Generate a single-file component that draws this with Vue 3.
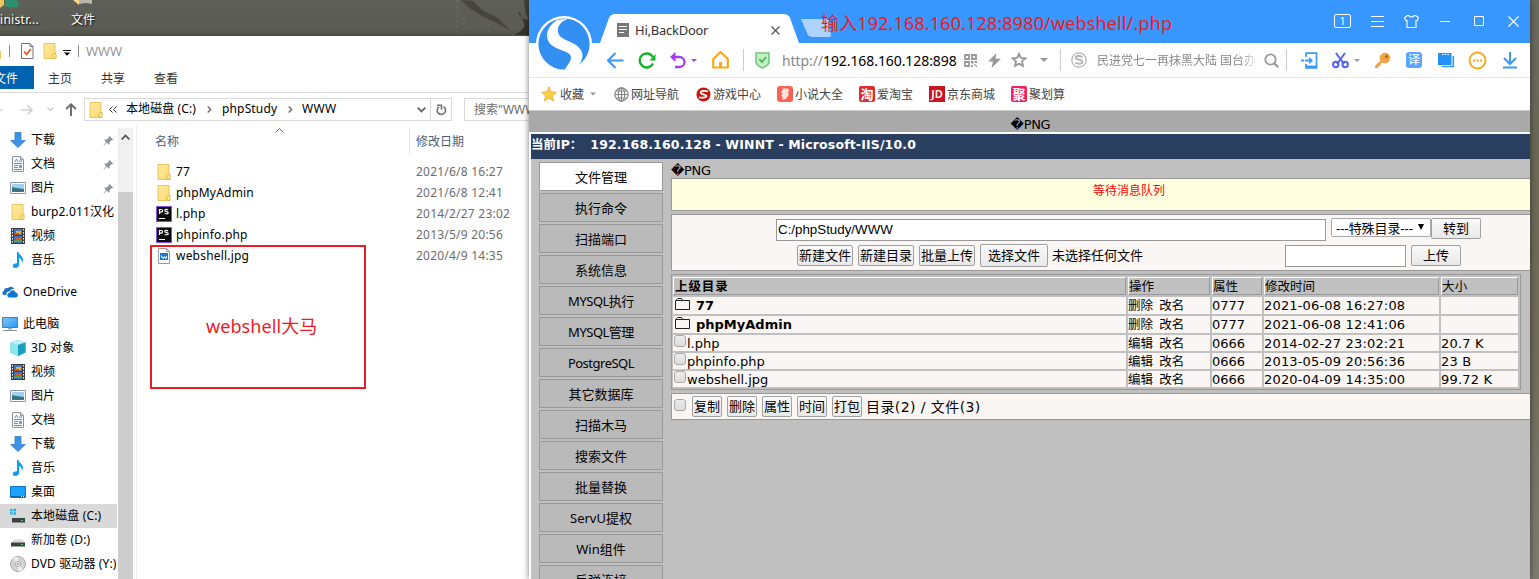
<script setup>
const places = [
  { icon: 'down', label: '下载', pin: true },
  { icon: 'doc', label: '文档', pin: true },
  { icon: 'pic', label: '图片', pin: true },
  { icon: 'folder', label: 'burp2.011汉化' },
  { icon: 'video', label: '视频' },
  { icon: 'music', label: '音乐' },
  { icon: 'cloud', label: 'OneDrive', root: true },
  { icon: 'pc', label: '此电脑', root: true },
  { icon: 'cube', label: '3D 对象' },
  { icon: 'video', label: '视频' },
  { icon: 'pic', label: '图片' },
  { icon: 'doc', label: '文档' },
  { icon: 'down', label: '下载' },
  { icon: 'music', label: '音乐' },
  { icon: 'desk', label: '桌面' },
  { icon: 'diskc', label: '本地磁盘 (C:)', active: true },
  { icon: 'disk', label: '新加卷 (D:)' },
  { icon: 'dvd', label: 'DVD 驱动器 (Y:)' },
]
const files = [
  { icon: 'folder', name: '77', date: '2021/6/8 16:27' },
  { icon: 'folder', name: 'phpMyAdmin', date: '2021/6/8 12:41' },
  { icon: 'ps', name: 'l.php', date: '2014/2/27 23:02' },
  { icon: 'ps', name: 'phpinfo.php', date: '2013/5/9 20:56' },
  { icon: 'jpg', name: 'webshell.jpg', date: '2020/4/9 14:35' },
]
const menu = ['文件管理', '执行命令', '扫描端口', '系统信息', 'MYSQL执行', 'MYSQL管理', 'PostgreSQL', '其它数据库', '扫描木马', '搜索文件', '批量替换', 'ServU提权', 'Win组件', '反弹连接']
const rows = [
  { dir: true, name: '77', ops: '删除 改名', attr: '0777', time: '2021-06-08 16:27:08', size: '' },
  { dir: true, name: 'phpMyAdmin', ops: '删除 改名', attr: '0777', time: '2021-06-08 12:41:06', size: '' },
  { name: 'l.php', ops: '编辑 改名', attr: '0666', time: '2014-02-27 23:02:21', size: '20.7 K' },
  { name: 'phpinfo.php', ops: '编辑 改名', attr: '0666', time: '2013-05-09 20:56:36', size: '23 B' },
  { name: 'webshell.jpg', ops: '编辑 改名', attr: '0666', time: '2020-04-09 14:35:00', size: '99.72 K' },
]
const actions = ['复制', '删除', '属性', '时间', '打包']
</script>

<template>
  <div class="desktop">
    <svg width="0" height="0" class="defs">
      <defs>
        <linearGradient id="gf" x1="0" y1="0" x2="1" y2="1"><stop offset="0" stop-color="#ffe9a0" /><stop offset="1" stop-color="#fbdb74" /></linearGradient>
        <linearGradient id="gb" x1="0" y1="0" x2="1" y2="1"><stop offset="0" stop-color="#7cc6fb" /><stop offset="1" stop-color="#2b9bf0" /></linearGradient>
      </defs>
      <symbol id="folder" viewBox="0 0 16 16"><path d="M2 .5h11v15H2z" fill="url(#gf)" stroke="#eac55c" /><path d="M12 10.500h2v5h-3v-4z" fill="#fde8a0" stroke="#e0b444" /></symbol>
      <symbol id="down" viewBox="0 0 16 16"><path d="M5 .5h6v8h4.300L8 15.600.7 8.500H5z" fill="#3f93e0" stroke="#2f7fca" stroke-width=".8" /></symbol>
      <symbol id="doc" viewBox="0 0 16 16"><path d="M2.500.6h8l3 3v11.800h-11z" fill="#fbfcfd" stroke="#8b9399" /><path d="M10.500.6v3h3" fill="none" stroke="#8b9399" /><path d="M5 6l1.500-3L8 6M9 5h3M4 7.500h8M4 9.500h4M4 11.500h4M4 13.500h8" stroke="#3c9be2" fill="none" /><path d="M9 9h3v3H9z" fill="#62a7d9" /></symbol>
      <symbol id="pic" viewBox="0 0 16 16"><path d="M.5 2.500h15v11H.5z" fill="#fff" stroke="#8f979c" /><path d="M2 4h12v8H2z" fill="#9ed2f4" /><path d="M2 7l4 1 8 1v3H2z" fill="#37756e" /><path d="M2 10.500h12V12H2z" fill="#3975a8" /></symbol>
      <symbol id="video" viewBox="0 0 16 16"><path d="M1 0h14v16H1z" fill="#3d3d3d" /><path d="M4 1h8v6H4zM4 8h8v7H4z" fill="#3f75c7" /><path d="M6 3h5v3H6z" fill="#e0b63c" /><path d="M4 5h5v2H4z" fill="#c64d36" /><path d="M6 10h5v2H6z" fill="#d7583c" /><path d="M4 12h8v2H4z" fill="#5b9d48" /><path d="M2.500 1v15M13.500 1v15" stroke="#fff" stroke-dasharray="1.500 1.500" /></symbol>
      <symbol id="music" viewBox="0 0 16 16"><path d="M7 0h1.500c.5 3 4.500 4 4.500 7.500 0 1.500-.7 2.600-1.300 3.500.5-3-1-4.600-2.700-5.200V13c0 2-1.500 3-3.400 3S2.700 15 2.700 13.700 4 11.300 7 11.300z" fill="#109bf2" /></symbol>
      <symbol id="cloud" viewBox="0 0 16 16"><path d="M2 11C0 10.500-.3 7.500 2 7c0-2 2-3.500 4-2.700C7.500 2 11 2.200 12 5c-3-.3-4 1.500-4.500 2.500C4.500 7.300 4 9.500 4.500 11z" fill="#1b6fc4" /><path d="M7.500 13.500c-3 0-3-4.500.3-4.700C8.300 5.500 12.700 5.200 13.500 8.500c3 0 3.200 5 0 5z" fill="#0a78d6" /></symbol>
      <symbol id="pc" viewBox="0 0 16 16"><path d="M.5 1.500h15v10H.5z" fill="url(#gb)" stroke="#547d99" /><path d="M6 12h4v1.500H6z" fill="#9aa9b5" /><path d="M1 14.500h14" stroke="#8399aa" /></symbol>
      <symbol id="cube" viewBox="0 0 16 16"><path d="M8 0l7.500 2.500v10L8 16 .5 12.500v-10z" fill="#35bcd3" /><path d="M.5 2.500L8 5v11L.5 12.500z" fill="#8fe4ee" /><path d="M.5 2.500L8 0l7.500 2.500L8 5z" fill="#c0f1f5" /><path d="M8 5l7.500-2.500v10L8 16z" fill="#19a0bf" /></symbol>
      <symbol id="desk" viewBox="0 0 16 16"><path d="M.5 2.500h15v11H.5z" fill="#1ba1fb" stroke="#0d76c4" /><path d="M1 12.500h14" stroke="#0e5f9c" /><path d="M11 12.500h3" stroke="#fff" stroke-dasharray="1" /></symbol>
      <symbol id="disk" viewBox="0 0 16 16"><path d="M4 7.500h8l3 3H1z" fill="#d4d7d9" /><path d="M1 10.500h14v4H1z" fill="#3d4142" /><path d="M11 12h2v1h-2z" fill="#42e05d" /></symbol>
      <symbol id="diskc" viewBox="0 0 16 16"><path d="M5 8h7l3 2H2z" fill="#d4d7d9" /><path d="M2 10h13v4.500H2z" fill="#3d4142" /><path d="M11 12h2v1h-2z" fill="#42e05d" /><path d="M0 1h2.600v2.400H0zM3.400.8H6v2.600H3.400zM0 4.200h2.600v2.400H0zM3.400 4.200H6v2.600H3.400z" fill="#19b5ee" /></symbol>
      <symbol id="dvd" viewBox="0 0 16 16"><circle cx="8" cy="8" r="7.500" fill="#d0d2d4" stroke="#aaa" /><path d="M8 8L3 2.500A7 7 0 0 1 8 1zM8 8l5 5.500a7 7 0 0 1-5 1.500z" fill="#efefef" /><circle cx="8" cy="8" r="2.500" fill="#f3f3f3" stroke="#aaa" /><circle cx="8" cy="8" r="1" fill="#999" /></symbol>
      <symbol id="ps" viewBox="0 0 16 16"><path d="M.5.5h15v15H.5z" fill="#0b0b0c" stroke="#8a4ce0" /><path d="M3.500 8V3.500h1.700a1.200 1.200 0 0 1 0 2.700H3.500M12 4c-1-1-3.200-.7-3.200.5 0 1.600 3.400.7 3.400 2.200 0 1.300-2.500 1.400-3.600.4" fill="none" stroke="#fff" stroke-width="1.200" /><path d="M3 12.500h6" stroke="#fff" /></symbol>
      <symbol id="jpg" viewBox="0 0 16 16"><path d="M2.500.5h8l3 3v12h-11z" fill="#fff" stroke="#9a9a9a" /><path d="M10.500.5v3h3" fill="none" stroke="#9a9a9a" /><path d="M4 5h8v7H4z" fill="#1479cf" /><path d="M5 7l2 2.500 1.500-1.500 1 1.500 1.500-2v2.500l-1.500 1-1-1.500L7 11l-2-2z" fill="#fff" /></symbol>
      <symbol id="pin" viewBox="0 0 12 12"><path d="M7 1l4 4-1 .8-.8-.2L7 8l.2 1.800-.8.8-2.200-2.200L1 11.500.5 11l3.100-3.200L1.400 5.600l.8-.8L4 5l2.400-2.200L6.200 2z" fill="#8a979f" /></symbol>
      <symbol id="caret" viewBox="0 0 8 4"><path d="M0 0h8L4 4z" fill="currentColor" /></symbol>
      <symbol id="dir" viewBox="0 0 16 13"><path d="M.5 2.500v9h14v-9zM1.500 2.500v-1l1-1h4l1 2" fill="none" stroke="#222" /></symbol>
    </svg>

    <svg class="wall" width="529" height="36" viewBox="0 0 529 36">
      <path d="M0 0h4v5l-4 3z" fill="#ecc85a" /><path d="M5 0h12l2 6-8 2-6-2z" fill="#2f9070" />
      <path d="M73 0l6 5V0z" fill="#f2d887" /><path d="M79 0h13v4l-6-1-7 1z" fill="#b9b5ac" />
      <path d="M461 0l11 10c9 5 14 9 23 12l16 9-13-13-16-8-9-9z" fill="#403c37" opacity=".75" />
      <path d="M519 11c-1 5 4 9 10 9v15h-15c6-3 12-7 10-12z" fill="#302c28" opacity=".8" />
      <path d="M524 0h5v20c-3-6-4-10-5-20z" fill="#3c3833" opacity=".7" />
      <path d="M457.500 0v35M464 17v8M489 24v9" stroke="#6d6d66" stroke-dasharray="3 2" />
    </svg>
    <div class="dlabels"><span>inistr...</span><span>文件</span></div>

    <section class="explorer">
      <div class="qat">
        <i class="sliver"></i><i class="vs"></i>
        <svg width="13" height="16" viewBox="0 0 13 16"><path d="M.5.5h8.500l3 3v12H.5z" fill="#fff" stroke="#777" /><path d="M9 .5v3h3" fill="none" stroke="#777" /><path d="M3 8.500l2.500 2.800L9.800 6" fill="none" stroke="#e8562a" stroke-width="1.800" /></svg>
        <svg width="16" height="16"><use href="#folder" /></svg>
        <svg width="8" height="6" viewBox="0 0 8 6"><path d="M0 .5h8" stroke="#000" /><path d="M1 2.500h6L4 5.800z" /></svg>
        <i class="vs"></i><span class="wt">WWW</span>
      </div>
      <div class="tabs"><b>文件</b><span>主页</span><span>共享</span><span>查看</span></div>
      <div class="addr">
        <svg width="4" height="12" viewBox="0 0 4 12"><path d="M0 6h3" stroke="#ccc" /></svg>
        <svg width="12" height="12" viewBox="0 0 12 12"><path d="M0 6h11M6.500 1.500L11 6l-4.500 4.500" fill="none" stroke="#d0d0d0" stroke-width="1.600" /></svg>
        <svg width="7" height="5" viewBox="0 0 7 5"><path d="M.5.500l3 3 3-3" fill="none" stroke="#ccc" stroke-width="1.300" /></svg>
        <svg width="12" height="13" viewBox="0 0 12 13"><path d="M6 13V1.500M1.200 6L6 1.300 10.800 6" fill="none" stroke="#686868" stroke-width="1.900" /></svg>
        <div class="box">
          <svg width="16" height="16"><use href="#folder" /></svg>
          <svg class="c1" width="8" height="7" viewBox="0 0 8 7"><path d="M3.500.500l-3 3 3 3M7.500.500l-3 3 3 3" fill="none" stroke="#333" /></svg>
          <span class="p1">本地磁盘 (C:)</span>
          <svg width="5" height="7" viewBox="0 0 5 7"><path d="M.7.500l3 3-3 3" fill="none" stroke="#666" stroke-width="1.300" /></svg>
          <span class="p2">phpStudy</span>
          <svg width="5" height="7" viewBox="0 0 5 7"><path d="M.7.500l3 3-3 3" fill="none" stroke="#666" stroke-width="1.300" /></svg>
          <span class="p3">WWW</span>
          <svg width="9" height="6" viewBox="0 0 9 6"><path d="M.7.700l3.800 3.800L8.300.7" fill="none" stroke="#666" stroke-width="1.800" /></svg>
          <i></i>
          <svg width="11" height="12" viewBox="0 0 11 12"><path d="M7.500 2.600A4.200 4.200 0 1 1 3 2.800" fill="none" stroke="#6d6d6d" stroke-width="1.600" /><path d="M1 1.200h4.500V5.700" fill="none" stroke="#6d6d6d" stroke-width="1.500" /></svg>
        </div>
        <div class="search">搜索"WWW"</div>
      </div>
      <div class="body">
        <nav>
          <div v-for="(p, i) in places" :key="i" class="pl" :class="{ root: p.root, on: p.active }">
            <svg width="16" height="16"><use :href="'#' + p.icon" /></svg>
            <span>{{ p.label }}</span>
            <svg v-if="p.pin" class="pin" width="11" height="11"><use href="#pin" /></svg>
          </div>
        </nav>
        <div class="sb"><svg width="9" height="6" viewBox="0 0 9 6"><path d="M.7 5.300l3.800-3.800 3.800 3.800" fill="none" stroke="#505050" stroke-width="1.700" /></svg><i></i></div>
        <div class="list">
          <div class="lh"><span>名称</span><svg width="9" height="5" viewBox="0 0 9 5"><path d="M.5 4.500l4-4 4 4" fill="none" stroke="#666" /></svg><span class="dh">修改日期</span></div>
          <div v-for="f in files" :key="f.name" class="fr"><svg width="16" height="16"><use :href="'#' + f.icon" /></svg><span>{{ f.name }}</span><em>{{ f.date }}</em></div>
        </div>
      </div>
      <div class="mark">webshell大马</div>
    </section>

    <section class="browser">
      <div class="title">
        <svg class="tab" width="232" height="29" viewBox="0 0 232 29"><path d="M0 29L9 4q2-4 6-4h169q4 0 6 4l9 25z" fill="#fff" /><path d="M201 5h26q2 0 2 3l2 14q0 1-4 1h-14q-5 0-6-4z" fill="#add3fe" /></svg>
        <div class="tabc">
          <svg width="12" height="14" viewBox="0 0 12 14"><path d="M0 0h12v14H0z" fill="#777" /><path d="M2 3.500h8M2 6.500h8M2 9.500h5" stroke="#fff" /></svg>
          <span>Hi,BackDoor</span>
          <svg width="9" height="9" viewBox="0 0 9 9"><path d="M.5.500l8 8M8.500.500l-8 8" stroke="#555" stroke-width="1.200" /></svg>
        </div>
        <div class="wbtn">
          <div class="one">1</div>
          <svg width="13" height="11" viewBox="0 0 13 11"><path d="M0 .5h13M0 5.500h13M0 10.500h13" stroke="#fff" /></svg>
          <svg width="15" height="13" viewBox="0 0 15 13"><path d="M4.500.5q3 3 6 0h1l3 2-1.200 3H12v7H3v-7H1.700L.5 2.500l3-2z" fill="none" stroke="#fff" stroke-width="1.100" /></svg>
          <svg width="10" height="3" viewBox="0 0 10 3"><path d="M0 1.500h10" stroke="#fff" /></svg>
          <svg width="10" height="10" viewBox="0 0 10 10"><path d="M.5.500h9v9h-9z" fill="none" stroke="#fff" /></svg>
          <svg width="11" height="11" viewBox="0 0 11 11"><path d="M.5.500l10 10M10.500.500l-10 10" stroke="#fff" stroke-width="1.100" /></svg>
        </div>
      </div>
      <div class="tools">
        <svg width="17" height="17" viewBox="0 0 17 17"><path d="M16.500 8.500H1.500M8.500 1L1 8.500 8.500 16" fill="none" stroke="#3b98fb" stroke-width="2" /></svg>
        <svg width="18" height="17" viewBox="0 0 18 17"><path d="M14.800 5A7 7 0 1 0 15 11.500" fill="none" stroke="#16b42c" stroke-width="2.400" /><path d="M17.500 2v6.500H11.500z" fill="#16b42c" /></svg>
        <svg width="18" height="17" viewBox="0 0 18 17"><path d="M3 5h7.500a5 5 0 0 1 0 10H6" fill="none" stroke="#a63cf0" stroke-width="2.300" /><path d="M6.500 0v10L1 5z" fill="#a63cf0" /></svg>
        <svg class="pu" width="6" height="3"><use href="#caret" /></svg>
        <svg width="17" height="18" viewBox="0 0 17 18"><path d="M1.200 16.500V8L8.500 1l7.300 7v8.500z" fill="none" stroke="#fda715" stroke-width="2.200" stroke-linejoin="round" /><path d="M7 11h3v5H7z" fill="#fda715" /></svg>
        <i class="sep"></i>
        <svg width="15" height="17" viewBox="0 0 15 17"><path d="M1 1h13v9q0 3-6.500 6Q1 13 1 10z" fill="#c6efc8" stroke="#70c97b" stroke-width="1.600" /><path d="M4.300 7l2.700 3 4.200-5" fill="none" stroke="#4fba5c" stroke-width="1.900" /></svg>
        <span class="url"><em>http://</em>192.168.160.128:898</span>
        <svg width="13" height="13" viewBox="0 0 13 13"><path d="M1 1h4v4H1zM8 1h4v4H8zM1 8h4v4H1z" fill="none" stroke="#999" stroke-width="1.800" /><path d="M7 7h2.500v2.500H7zM10.500 7H13v2h-2.500zM7 11h2v2H7zM10 10h1.500v1.500H10zM11.500 11.500H13V13h-1.500z" fill="#999" /></svg>
        <svg width="13" height="15" viewBox="0 0 13 15"><path d="M8.500 0L0 8.500h5L3.500 15 13 5.700H7.500z" fill="#999" /></svg>
        <svg width="16" height="16" viewBox="0 0 16 16"><path d="M8 1.800l1.900 4.100 4.500.5-3.400 3 1 4.500L8 11.600l-4 2.300 1-4.500-3.400-3 4.500-.5z" fill="none" stroke="#999" stroke-width="1.900" /></svg>
        <svg class="gr" width="8" height="4"><use href="#caret" /></svg>
        <i class="sep"></i>
        <svg width="16" height="16" viewBox="0 0 16 16"><circle cx="8" cy="8" r="7.200" fill="none" stroke="#b5b5b5" stroke-width="1.300" /><path d="M11.500 5.200C9 3.200 4.600 3.700 4.700 5.900s6.700 1.600 6.700 3.900-4.400 2.700-7 .8" fill="none" stroke="#b5b5b5" stroke-width="1.900" /></svg>
        <span class="hot">民进党七一再抹黑大陆 国台办:</span>
        <svg width="15" height="15" viewBox="0 0 15 15"><circle cx="6.500" cy="6.500" r="5.200" fill="none" stroke="#999" stroke-width="1.800" /><path d="M10.200 10.200l4 4" stroke="#999" stroke-width="2.200" /></svg>
        <i class="sep"></i>
        <svg width="17" height="17" viewBox="0 0 17 17"><path d="M5 5V1.200h10.500v14.600H5V12" fill="none" stroke="#3b98fb" stroke-width="1.700" /><path d="M0 8.500h3M4 8.500h7" stroke="#3b98fb" stroke-width="1.800" /><path d="M8 5l4 3.500L8 12z" fill="#3b98fb" /><path d="M5 13.500h10v2H5z" fill="#3b98fb" /></svg>
        <svg width="17" height="17" viewBox="0 0 17 17"><path d="M4 1l8 11M13 1L5 12" stroke="#5163f2" stroke-width="2" /><circle cx="3.800" cy="12.500" r="2.700" fill="none" stroke="#5163f2" stroke-width="2" /><circle cx="13.200" cy="12.500" r="2.700" fill="none" stroke="#5163f2" stroke-width="2" /></svg>
        <svg class="gr" width="6" height="3"><use href="#caret" /></svg>
        <svg width="17" height="17" viewBox="0 0 17 17"><path d="M7 8L1 14v2h3l.5-2h2v-2L9 10z" fill="#f0a040" /><circle cx="11" cy="6" r="5.300" fill="#f3a543" /><circle cx="12.500" cy="4.500" r="1.500" fill="#9a6828" /></svg>
        <div class="yi">译</div>
        <svg width="17" height="17" viewBox="0 0 17 17"><path d="M4 14.500h11.300V4" fill="none" stroke="#3b98fb" stroke-width="1.700" /><path d="M0 1h13.500v12H0z" fill="#2590f7" /><path d="M4 2.500h8" stroke="#fff" stroke-dasharray="1.700 1" /></svg>
        <svg width="19" height="19" viewBox="0 0 19 19"><circle cx="9.500" cy="9.500" r="8" fill="none" stroke="#fda715" stroke-width="2" /><path d="M5 9.500h10" stroke="#fda715" stroke-width="2" stroke-dasharray="2 1.500" /></svg>
        <svg width="16" height="17" viewBox="0 0 16 17"><path d="M8 0v12M2 6l6 6 6-6M1 15.500h14" fill="none" stroke="#3b98fb" stroke-width="2" /></svg>
      </div>
      <div class="marks">
        <svg width="16" height="16" viewBox="0 0 16 16"><path d="M8 .8l2.200 4.900 5.200.6-3.900 3.500 1.100 5.200L8 12.400 3.400 15l1.100-5.200L.6 6.300l5.200-.6z" fill="#f7cf45" stroke="#e9a83a" stroke-width=".8" /></svg>
        <span>收藏</span>
        <svg class="gr" width="6" height="4"><use href="#caret" /></svg>
        <svg width="15" height="15" viewBox="0 0 15 15"><g fill="none" stroke="#888" stroke-width="1.200"><circle cx="7.500" cy="7.500" r="6.600" /><ellipse cx="7.500" cy="7.500" rx="3.200" ry="6.600" /><path d="M1 7.500h13M7.500 1v13M2 4h11M2 11h11" /></g></svg>
        <span>网址导航</span>
        <svg width="15" height="15" viewBox="0 0 15 15"><circle cx="7.500" cy="7.500" r="7" fill="#c4160c" /><path d="M12 4.300C9 3.500 4.500 3.500 4.700 5.700S10.500 7.300 10.500 9 6 11 3 10.300" fill="none" stroke="#fff" stroke-width="1.800" /></svg>
        <span>游戏中心</span>
        <svg width="16" height="16" viewBox="0 0 16 16"><rect width="16" height="16" rx="3" fill="#fc6254" /><path d="M6 2.500h5l1 1-1 4 1 1-2 3-2 2H5l1-2-2-2 2-2-2-1z" fill="#ffe3df" /></svg>
        <span>小说大全</span>
        <b class="tb">淘</b><span>爱淘宝</span>
        <b class="jd">JD</b><span>京东商城</span>
        <b class="ju">聚</b><span>聚划算</span>
      </div>
      <div class="gray">�PNG</div>
      <div class="page">
        <header>当前IP： <span>192.168.160.128 - WINNT - Microsoft-IIS/10.0</span></header>
        <div class="cols">
          <aside><div v-for="(m, i) in menu" :key="m" :class="{ sel: i === 0, tight: m.includes('SQL') }">{{ m }}</div></aside>
          <main>
            <div class="png">�PNG</div>
            <div class="msg">等待消息队列</div>
            <div class="form">
              <div class="f1"><div class="inp">C:/phpStudy/WWW</div><div class="selb"><span>---特殊目录---</span><svg width="6" height="6" viewBox="0 0 6 6"><path d="M0 0h6L3 6z" /></svg></div><div class="btn w">转到</div></div>
              <div class="f2"><div class="btn">新建文件</div><div class="btn">新建目录</div><div class="btn">批量上传</div><div class="btn file">选择文件</div><span>未选择任何文件</span><div class="inp s"></div><div class="btn w">上传</div></div>
            </div>
            <div class="grid">
              <div class="r h"><span><b>上级目录</b></span><span>操作</span><span>属性</span><span>修改时间</span><span>大小</span></div>
              <div v-for="r in rows" :key="r.name" class="r" :class="{ d: r.dir }">
                <span class="nm"><template v-if="r.dir"><svg width="16" height="13"><use href="#dir" /></svg><b>{{ r.name }}</b></template><template v-else><i class="cb"></i>{{ r.name }}</template></span>
                <span class="op">{{ r.ops }}</span><span>{{ r.attr }}</span><span class="tm">{{ r.time }}</span><span class="sz">{{ r.size }}</span>
              </div>
            </div>
            <div class="foot"><i class="cb"></i><div v-for="a in actions" :key="a" class="btn">{{ a }}</div><span>目录(2) / 文件(3)</span></div>
          </main>
        </div>
      </div>
      <svg class="logo" width="58" height="58" viewBox="0 0 58 58">
        <circle cx="29" cy="29" r="28" fill="#fff" /><circle cx="29" cy="29" r="25.600" fill="#348ff3" />
        <path d="M34 3.500C26 6 22 11 23 17c1 7 10 8 18 13 9 6 8 15 1 22l-4 4-8-2c5-7 9-12 3-16-7-4-20-5-21-17 0-7 4-12 10-16z" fill="#fff" />
      </svg>
      <div class="note">输入192.168.160.128:8980/webshell/.php</div>
    </section>
  </div>
</template>

<style>
html, body { overflow: hidden; }
</style>

<style scoped>
* { box-sizing: border-box; }
svg { display: block; flex: none; }
i, em { font-style: normal; }
.defs { position: absolute; }
.desktop { position: relative; width: 1539px; height: 579px; overflow: hidden; background: linear-gradient(#68695f, #6b6856 25%, #706c5a 60%, #7c7c70); font: 12px/16px "Noto Sans", "Noto Sans CJK SC", sans-serif; color: #000; white-space: nowrap; }
.wall { position: absolute; left: 0; top: 0; background: linear-gradient(#5d5f58, #5b5c54 80%, #4d4e48); }
.dlabels { position: absolute; left: 0; top: 12px; width: 200px; display: flex; color: #fff; text-shadow: 1px 1px 2px #000; }
.dlabels span:first-child { width: 71px; letter-spacing: .3px; }

.explorer { position: absolute; left: 0; top: 36px; width: 529px; height: 543px; background: #fff; overflow: hidden; }
.qat { display: flex; align-items: center; height: 30px; }
.sliver { width: 1px; height: 8px; margin-top: 8px; background: #efc65a; margin-right: 8px; }
.vs { width: 1px; height: 12px; background: #888; }
.qat svg:nth-of-type(1) { margin-left: 11px; }
.qat svg:nth-of-type(2) { margin-left: 8px; }
.qat svg:nth-of-type(3) { margin: 4px 7px 0 5px; }
.wt { margin-left: 7px; color: #999; font-size: 13px; letter-spacing: -.1px; line-height: 14px; margin-top: -1px; }
.tabs { display: flex; height: 27px; border-bottom: 1px solid #dadbdc; line-height: 25px; color: #333; }
.tabs b { width: 34px; height: 23px; background: #0063b1; color: #fff; font-weight: 400; text-indent: -6px; margin-right: 14px; }
.tabs span { width: 53px; }
.addr { display: flex; align-items: center; height: 31px; margin-top: 1px; }
.addr > svg:nth-of-type(2) { margin-left: 17px; }
.addr > svg:nth-of-type(3) { margin-left: 14px; }
.addr > svg:nth-of-type(4) { margin-left: 11px; }
.box { display: flex; align-items: center; flex: none; width: 368px; height: 23px; margin-left: 7px; border: 1px solid #d9d9d9; line-height: 14px; }
.box > svg:first-child { margin-left: 3px; }
.box span { margin-top: -1px; letter-spacing: .1px; }
.c1 { margin-left: 5px; }
.box .p1 { width: 81px; margin-left: 9px; }
.box .p2 { width: 66px; margin-left: 10px; letter-spacing: .15px; }
.box .p3 { width: 115px; margin-left: 9px; letter-spacing: .4px; }
.box i { width: 1px; height: 21px; background: #d9d9d9; margin: 0 5px 0 4px; }
.search { flex: none; width: 90px; height: 23px; margin-left: 12px; border: 1px solid #d9d9d9; padding-left: 9px; line-height: 22px; color: #6d6d6d; }
.body { display: flex; height: 454px; }
nav { width: 118px; padding-top: 3px; overflow: hidden; }
.pl { display: flex; align-items: center; width: 117px; height: 24px; padding-left: 10px; overflow: hidden; }
.pl span { margin-left: 5px; letter-spacing: .12px; }
.pl.root { padding-left: 2px; margin-top: 8px; }
.pl.on { background: #d9d9d9; }
.pin { margin-left: auto; margin-right: 3px; }
.sb { width: 15px; background: #f0f0f0; margin-top: 3px; }
.sb svg { margin: 6px 3px 0; }
.sb i { display: block; height: 400px; margin-top: 52px; background: #cdcdcd; }
.list { flex: 1; margin-left: 3px; border-left: 1px solid #eee; }
.lh { display: flex; height: 27px; margin: 3px 0 6px 18px; color: #4c607a; line-height: 27px; }
.lh span:first-child { width: 120px; }
.lh svg { margin-top: 0; }
.dh { margin-left: 125px; padding-left: 6px; border-left: 1px solid #e5e5e5; }
.fr { display: flex; align-items: center; height: 21px; padding-left: 19px; }
.fr span { width: 244px; padding-left: 4px; letter-spacing: .2px; }
.fr em { color: #6d6d6d; letter-spacing: .22px; }
.mark { position: absolute; left: 150px; top: 209px; width: 216px; height: 144px; border: 2px solid #ed1c24; color: #ed1c24; font-size: 18px; line-height: 159px; padding-left: 54px; letter-spacing: .08px; }

.browser { position: absolute; left: 529px; top: 0; width: 1001px; height: 579px; background: #fff; box-shadow: 0 0 6px rgba(0, 0, 0, .55); }
.title { display: flex; height: 43px; background: #3897ff; position: relative; }
.tab { margin: 14px 0 0 71px; }
.tabc { position: absolute; left: 88px; top: 20px; width: 163px; height: 20px; display: flex; align-items: center; font-size: 13px; color: #333; }
.tabc span { margin: 0 auto 0 6px; letter-spacing: -.25px; }
.wbtn { display: grid; grid-template-columns: 37px 33px 36px 34px 34px 12px; align-items: center; height: 42px; margin-left: 502px; }
.one { width: 17px; height: 14px; border: 1px solid #fff; border-radius: 2px; color: #fff; font-size: 10px; line-height: 12px; text-align: center; }
.tools { display: grid; grid-template-columns: 31px 31px 22px 21px 31px 12px 27px 182px 24px 23px 29px 20px 11px 26px 167px 22px 15px 31px 22px 20px 32px 32px 30px 34px 20px; padding-left: 78px; height: 35px; align-items: center; border-bottom: 1px solid #e5e5e5; }
.sep { width: 1px; height: 22px; background: #ccc; }
.pu { color: #a63cf0; }
.gr { color: #999; }
.url { font-size: 14px; letter-spacing: -.08px; padding-top: 1px; }
.url em { color: #888; }
.hot { width: 162px; overflow: hidden; color: #888; padding-top: 1px; -webkit-mask-image: linear-gradient(90deg, #000 88%, transparent); mask-image: linear-gradient(90deg, #000 88%, transparent); }
.yi { width: 16px; height: 16px; border-radius: 3px; background: #57a6ff; color: #fff; text-align: center; line-height: 15px; }
.marks { display: grid; grid-template-columns: 19px 30px 24px 17px 65px 17px 64px 18px 64px 18px 52px 18px 64px 18px 50px; padding-left: 12px; height: 33px; align-items: center; border-bottom: 1px solid #ccc; color: #444; }
.marks span { padding-top: 1px; }
.marks b { width: 16px; height: 16px; color: #fff; text-align: center; line-height: 16px; font-size: 13px; }
.tb { background: #e02a2e; border-radius: 2px; }
.marks .jd { background: #c9151e; font-size: 11px; font-weight: 600; }
.ju { background: #f0205a; border-radius: 2px; }
.gray { height: 21px; background: #a9a9a9; text-align: center; font: 13px/27px "DejaVu Sans"; letter-spacing: -.3px; padding-left: 2px; }
.page { border-top: 2px solid #fff; border-left: 2px solid #fff; height: 447px; background: #c0c0c0; font-family: "DejaVu Sans", "Noto Sans CJK SC", sans-serif; font-size: 13px; overflow: hidden; }
header { height: 25px; background: #2a3f5f; color: #fff; font-weight: 700; font-size: 12.500px; line-height: 22px; display: flex; }
header span { margin-left: 8px; letter-spacing: .14px; }
.cols { display: flex; }
aside { width: 124px; margin: 3px 8px 0; }
aside div { height: 29px; margin-bottom: 2px; border: 1px solid #999; background: #bababa; text-align: center; line-height: 28px; font-family: "Noto Sans", "Noto Sans CJK SC", sans-serif; font-size: 13px; }
aside .sel { background: #fff; }
aside .tight { letter-spacing: -.5px; }
main { width: 859px; }
.png { height: 19px; line-height: 23px; letter-spacing: -.3px; }
.msg { height: 33px; border: 1px solid #999; border-right: 0; background: #ffffdf; color: red; font-size: 12px; line-height: 24px; padding-left: 421px; }
.form { height: 57px; margin-top: 3px; border: 1px solid #999; border-right: 0; background: #faf6f3; }
.f1, .f2 { display: flex; align-items: flex-start; }
.f1 { padding: 3px 0 0 104px; }
.inp { width: 550px; height: 22px; margin-top: 1px; background: #fff; border: 1px solid #999; padding-left: 1px; font: 13.330px/19px "Liberation Sans"; }
.selb { display: flex; width: 100px; height: 19px; margin-left: 5px; border: 1px solid #a9a9a9; border-radius: 2px; background: #fff; padding-left: 4px; line-height: 20px; letter-spacing: -.1px; font-family: "Liberation Sans", "Noto Sans CJK SC"; }
.selb svg { margin: 5px 0 0 auto; margin-right: 6px; }
.btn { height: 21px; border: 1px solid #a0a0a0; border-radius: 2px; background: linear-gradient(#fafafa, #e8e8e8); text-align: center; line-height: 20px; width: 56px; }
.btn.w { width: 50px; }
.f2 { padding: 3px 0 0 125px; margin-top: 1px; }
.f2 .btn + .btn { margin-left: 5px; }
.f2 .file { width: 68px; height: 23px; margin-top: -1px; line-height: 22px; }
.f2 span { width: 233px; margin-left: 4px; line-height: 22px; }
.inp.s { width: 121px; margin: 0 5px 0 0; }
.grid { width: 850px; height: 116px; margin-top: 3px; border: 1px solid #999; padding: 2px 1px; display: grid; grid-template-rows: 18px 17px 17px 16px 16px 16px; row-gap: 2px; }
.r { display: grid; grid-template-columns: 453px 82px 50px 175px 77px; column-gap: 2px; line-height: 17px; }
.r > span { background: #faf6f3; display: flex; overflow: hidden; }
.r.h > span { background: #c0c0c0; border: 1px solid #999; border-top-color: #fff; border-left-color: #fff; font-size: 12.500px; line-height: 17px; padding-left: 0; }
.r.h > span:first-child { padding-left: 1px; letter-spacing: .9px; }
.r.d { line-height: 18px; }
.r svg { margin: 1px 5px 0 2px; }
.r .op { font-size: 12.500px; word-spacing: 2px; letter-spacing: .1px; }
.r > span:last-child { letter-spacing: .2px; }
.tm { letter-spacing: .17px; }
.cb { width: 12px; height: 12px; border: 1px solid #aaa; border-radius: 3px; background: linear-gradient(#ececec, #dcdcdc); flex: none; margin-right: 2px; }
.r .cb { margin-left: 1px; margin-right: 1px; }
.foot { display: flex; height: 27px; margin-top: 3px; border: 1px solid #999; border-right: 0; background: #faf6f3; padding: 2px 0 0 2px; }
.foot .cb { margin: 3px 1px 0 0; }
.foot .btn { width: 30px; margin-left: 5px; }
.foot span { margin-left: 4px; font-size: 14px; line-height: 22px; letter-spacing: .42px; }
.logo { position: absolute; left: 6px; top: 15px; }
.note { position: absolute; left: 292px; top: 10px; font-size: 18px; line-height: 27px; color: #ed1c24; letter-spacing: .14px; }
</style>
